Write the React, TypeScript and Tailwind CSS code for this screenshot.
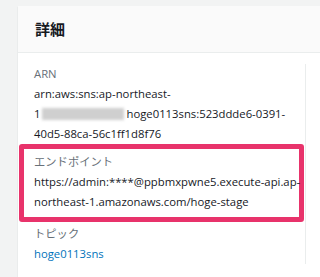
import React from "react";

const Label = ({ children }: { children: React.ReactNode }) => (
  <div className="text-[#687078]">{children}</div>
);

const App = () => {
  return (
    <div
      className="h-[277px] overflow-hidden bg-[#f2f3f3] pl-[18px] pt-[6px]"
      style={{ fontFamily: '"Open Sans", "Noto Sans CJK JP", sans-serif' }}
    >
      <div className="h-[300px] w-[330px] bg-white shadow-[0_1px_1px_rgba(0,28,36,0.2)]">
        <div className="flex h-[47px] items-center border-b border-[#eaeded] bg-[#fafafa] px-[17px]">
          <h2 className="text-[15px] font-bold text-[#16191f]">詳細</h2>
        </div>
        <div className="flex pt-[11px]">
          <div className="w-[288px] whitespace-nowrap border-r border-[#eaeded] px-[16px] text-[11.3px] leading-[20px] text-[#16191f]">
            <div>
              <Label>ARN</Label>
              <div>arn:aws:sns:ap-northeast-</div>
              <div className="flex items-center">
                1
                <span className="mx-[2px] inline-block h-[12px] w-[82px] bg-[#cfcfcf] blur-[1.5px]" />
                hoge0113sns:523ddde6-0391-
              </div>
              <div>40d5-88ca-56c1ff1d8f76</div>
            </div>
            <div className="-mx-[15px] rounded-[3px] border-[5px] border-[#e8336b] px-[10px] pt-[3px] pb-[5px]">
              <Label>エンドポイント</Label>
              <div>https://admin:****@ppbmxpwne5.execute-api.ap-</div>
              <div>northeast-1.amazonaws.com/hoge-stage</div>
            </div>
            <div className="pt-[2px]">
              <Label>トピック</Label>
              <div className="text-[#0073bb]">hoge0113sns</div>
            </div>
          </div>
        </div>
      </div>
    </div>
  );
};

export default App;
